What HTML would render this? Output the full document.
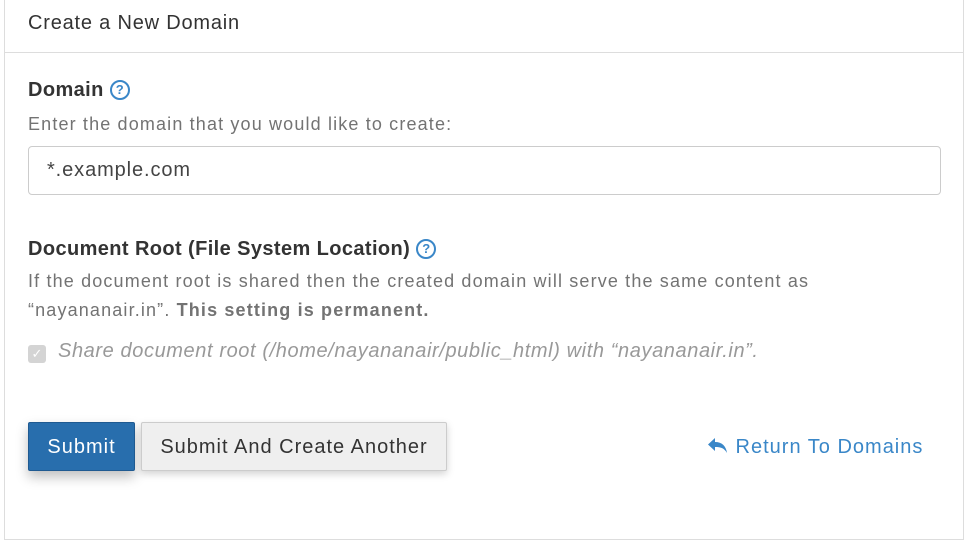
<!DOCTYPE html>
<html><head><meta charset="utf-8"><style>
body{margin:0;background:#fff;font-family:"Liberation Sans",sans-serif;width:969px;height:529px;overflow:hidden;position:relative;color:#333}
.panel{position:absolute;left:4px;top:-2px;width:958px;height:540px;border:1px solid #ddd;background:#fff}
.hd{position:absolute;left:28px;top:12px;font-size:20px;color:#333;letter-spacing:0.8px}
.line{position:absolute;left:5px;right:6px;top:52px;border-top:1px solid #ddd}
.lbl{position:absolute;left:28px;font-size:20px;font-weight:bold;color:#333;letter-spacing:0.4px}
.q{display:inline-block;width:16px;height:16px;border:2px solid #3a87c8;border-radius:50%;color:#3a87c8;font-size:13px;line-height:16px;text-align:center;font-weight:bold;vertical-align:2px;margin-left:6px;letter-spacing:0}
.help{position:absolute;left:28px;font-size:18px;color:#737373;line-height:29px;letter-spacing:1.15px}
.inp{position:absolute;left:28px;top:146px;width:913px;height:49px;border:1px solid #ccc;border-radius:4px;box-sizing:border-box;font-size:20px;color:#444;padding:12px 18px;letter-spacing:0.9px}
.cb{position:absolute;left:28px;top:345px;width:18px;height:18px;background:#d4d4d4;border-radius:3px;color:#fff;font-size:13px;text-align:center;line-height:18px}
.cbt{position:absolute;left:58px;top:340px;font-size:20px;font-style:italic;color:#999;letter-spacing:0.6px}
.btn{position:absolute;top:422px;height:49px;box-sizing:border-box;font-size:20px;border-radius:2px;line-height:49px;text-align:center;letter-spacing:1px}
.b1{left:28px;width:107px;background:#286ead;color:#fff;border:1px solid #1f5a91;box-shadow:0 6px 12px rgba(0,0,0,.25)}
.b2{left:141px;width:306px;background:#efefef;color:#333;border:1px solid #ccc;box-shadow:0 3px 8px rgba(0,0,0,.18)}
.ret{position:absolute;left:707px;top:436px;font-size:20px;color:#3a87c8;letter-spacing:1px}
</style></head><body>
<div class="panel"></div>
<div class="hd">Create a New Domain</div>
<div class="line"></div>
<div class="lbl" style="top:79px">Domain<span class="q">?</span></div>
<div class="help" style="top:110px">Enter the domain that you would like to create:</div>
<div class="inp">*.example.com</div>
<div class="lbl" style="top:238px">Document Root (File System Location)<span class="q">?</span></div>
<div class="help" style="top:267px">If the document root is shared then the created domain will serve the same content as<br>“nayananair.in”. <b>This setting is permanent.</b></div>
<div class="cb">✓</div>
<div class="cbt">Share document root (/home/nayananair/public_html) with “nayananair.in”.</div>
<div class="btn b1">Submit</div>
<div class="btn b2">Submit And Create Another</div>
<div class="ret"><svg width="22" height="18" viewBox="0 0 22 18" style="vertical-align:-2px"><path d="M8 1L1 7.5 8 14V10c6 0 9 1 12 6-1-7-5-11-12-11V1z" fill="#3a87c8"/></svg> Return To Domains</div>
</body></html>
